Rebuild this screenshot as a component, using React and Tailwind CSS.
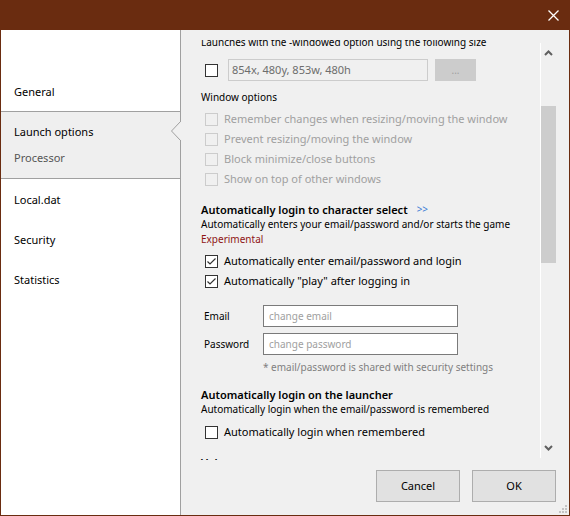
import { useState } from 'react';

const FONT = { fontFamily: '"Noto Sans", "Open Sans", sans-serif' };

function Box({ checked, disabled, onClick }) {
  return (
    <span
      onClick={onClick}
      className={`w-[13px] h-[13px] border flex items-center justify-center shrink-0 ${
        disabled ? 'border-[#cccccc] bg-[#f0f0f0]' : 'border-[#333333] bg-white'
      }`}
    >
      {checked && (
        <svg width="11" height="11" viewBox="0 0 11 11">
          <polyline points="1.5,5.5 4,8 9.5,2.5" fill="none" stroke="#333" strokeWidth="1.2" />
        </svg>
      )}
    </span>
  );
}

function Check({ label, checked, disabled }) {
  const [on, setOn] = useState(checked);
  return (
    <label className="h-[20px] flex items-center gap-[6px] pl-[4px]">
      <Box checked={on} disabled={disabled} onClick={() => !disabled && setOn(!on)} />
      <span className={`text-[11px] whitespace-nowrap ${disabled ? 'text-[#a0a0a0]' : 'text-black'}`}>{label}</span>
    </label>
  );
}

function Chevron({ up }) {
  return (
    <svg width="9" height="6" viewBox="0 0 9 6">
      <polyline
        points={up ? '1,5 4.5,1.5 8,5' : '1,1 4.5,4.5 8,1'}
        fill="none"
        stroke="#606060"
        strokeWidth="2"
      />
    </svg>
  );
}

export default function App() {
  const [active] = useState('launch');

  return (
    <div className="w-[570px] h-[516px] bg-[#6a2c10] px-px pb-px flex flex-col select-none" style={FONT}>
      {/* Title bar */}
      <div className="h-[30px] flex items-center justify-end pr-[10px]">
        <svg width="11" height="11" viewBox="0 0 11 11">
          <path d="M0.5 0.5 L10.5 10.5 M10.5 0.5 L0.5 10.5" stroke="#ffffff" strokeWidth="1.3" />
        </svg>
      </div>

      <div className="flex-1 flex min-h-0">
        {/* Sidebar */}
        <div className="w-[180px] bg-white border-r border-[#a0a0a0] flex flex-col text-[11px] text-black">
          <div className="h-[81px] flex items-end pb-[11px] pl-[13px] leading-[16px]">General</div>
          <div className="h-px bg-[#a0a0a0] -mr-px" />
          <div className={`relative h-[66px] pl-[13px] pt-[12px] leading-[16px] ${active === 'launch' ? 'bg-[#efefef]' : ''}`}>
            <div>Launch options</div>
            <div className="mt-[10px] text-[#555555]">Processor</div>
            <svg className="absolute left-[169px] top-[9px]" width="12" height="21" viewBox="0 0 12 21">
              <polygon points="10,1 1.5,10 10,19 12,19 12,1" fill="#f0f0f0" />
              <polyline points="10.5,0.5 1.5,10 10.5,19.5" fill="none" stroke="#a0a0a0" strokeWidth="1" />
            </svg>
          </div>
          <div className="h-px bg-[#a0a0a0] -mr-px" />
          <div className="pl-[13px] pt-[13px] leading-[16px] flex flex-col gap-[24px]">
            <div>Local.dat</div>
            <div>Security</div>
            <div>Statistics</div>
          </div>
        </div>

        {/* Main */}
        <div className="flex-1 bg-[#f0f0f0] flex flex-col">
          <div className="h-[430px] pt-[10px] flex">
            <div className="flex-1 h-[420px] overflow-hidden">
              <div className="-mt-[6px] pl-[20px] text-black">
                <div className="h-[16px] leading-[16px] text-[10px] whitespace-nowrap">
                  Launches with the -windowed option using the following size
                </div>
                <div className="mt-[9px] h-[22px] flex items-center">
                  <span className="pl-[4px] pr-[10px]"><Box /></span>
                  <div className="w-[200px] h-[22px] border border-[#cccccc] bg-[#f0f0f0] flex items-center pl-[3px] text-[11px] text-[#6d6d6d]">
                    854x, 480y, 853w, 480h
                  </div>
                  <div className="ml-[7px] w-[41px] h-[22px] bg-[#cccccc] flex items-center justify-center text-[10px] text-[#a0a0a0]">
                    ...
                  </div>
                </div>
                <div className="mt-[8px] h-[16px] leading-[16px] text-[10px]">Window options</div>
                <div className="mt-[4px]">
                  <Check disabled label="Remember changes when resizing/moving the window" />
                  <Check disabled label="Prevent resizing/moving the window" />
                  <Check disabled label="Block minimize/close buttons" />
                  <Check disabled label="Show on top of other windows" />
                </div>

                <div className="mt-[13px] h-[15px] leading-[15px] text-[11px] font-semibold flex items-center">
                  Automatically login to character select
                  <span className="ml-[9px] text-[10px] font-normal text-[#3a7bd5]">&gt;&gt;</span>
                </div>
                <div className="h-[15px] leading-[15px] text-[10px] whitespace-nowrap">
                  Automatically enters your email/password and/or starts the game
                </div>
                <div className="h-[15px] leading-[15px] text-[10px] text-[#8f1414]">Experimental</div>
                <div className="mt-[4px]">
                  <Check checked label="Automatically enter email/password and login" />
                  <Check checked label={'Automatically "play" after logging in'} />
                </div>

                <div className="mt-[14px] flex flex-col gap-[6px] text-[10px]">
                  <div className="flex items-center h-[22px]">
                    <span className="w-[62px] pl-[3px]">Email</span>
                    <div className="w-[195px] h-[22px] border border-[#7a7a7a] bg-white flex items-center pl-[5px] text-[#a0a0a0]">
                      change email
                    </div>
                  </div>
                  <div className="flex items-center h-[22px]">
                    <span className="w-[62px] pl-[3px]">Password</span>
                    <div className="w-[195px] h-[22px] border border-[#7a7a7a] bg-white flex items-center pl-[5px] text-[#a0a0a0]">
                      change password
                    </div>
                  </div>
                </div>
                <div className="mt-[5px] pl-[62px] h-[15px] leading-[15px] text-[10px] text-[#808080] whitespace-nowrap">
                  * email/password is shared with security settings
                </div>

                <div className="mt-[12px] h-[15px] leading-[15px] text-[11px] font-semibold">
                  Automatically login on the launcher
                </div>
                <div className="h-[15px] leading-[15px] text-[10px] whitespace-nowrap">
                  Automatically login when the email/password is remembered
                </div>
                <div className="mt-[5px]">
                  <Check label="Automatically login when remembered" />
                </div>
                <div className="mt-[13px] h-[16px] leading-[16px] text-[11px] font-semibold">Volume</div>
              </div>
            </div>

            {/* Scrollbar */}
            <div className="mt-[3px] mr-[13px] w-[16px] h-[415px] border-l border-white flex flex-col items-center">
              <div className="h-[18px] flex items-center justify-center pt-[2px]">
                <Chevron up />
              </div>
              <div className="mt-[45px] w-[15px] h-[157px] bg-[#cdcdcd]" />
              <div className="flex-1" />
              <div className="h-[18px] flex items-center justify-center pb-[2px]">
                <Chevron />
              </div>
            </div>
          </div>

          {/* Buttons */}
          <div className="flex-1 relative flex justify-end gap-[12px] pt-[10px] pr-[13px]">
            <button className="w-[84px] h-[32px] bg-[#e1e1e1] border border-[#adadad] text-[11px] text-black">Cancel</button>
            <button className="w-[84px] h-[32px] bg-[#e1e1e1] border border-[#adadad] text-[11px] text-black">OK</button>
            <svg className="absolute right-[2px] bottom-[2px]" width="8" height="8" viewBox="0 0 8 8">
              <rect x="6" y="0" width="2" height="2" fill="#c4c4c4" />
              <rect x="3" y="3" width="2" height="2" fill="#c4c4c4" />
              <rect x="6" y="3" width="2" height="2" fill="#c4c4c4" />
              <rect x="0" y="6" width="2" height="2" fill="#c4c4c4" />
              <rect x="3" y="6" width="2" height="2" fill="#c4c4c4" />
              <rect x="6" y="6" width="2" height="2" fill="#c4c4c4" />
            </svg>
          </div>
        </div>
      </div>
    </div>
  );
}
